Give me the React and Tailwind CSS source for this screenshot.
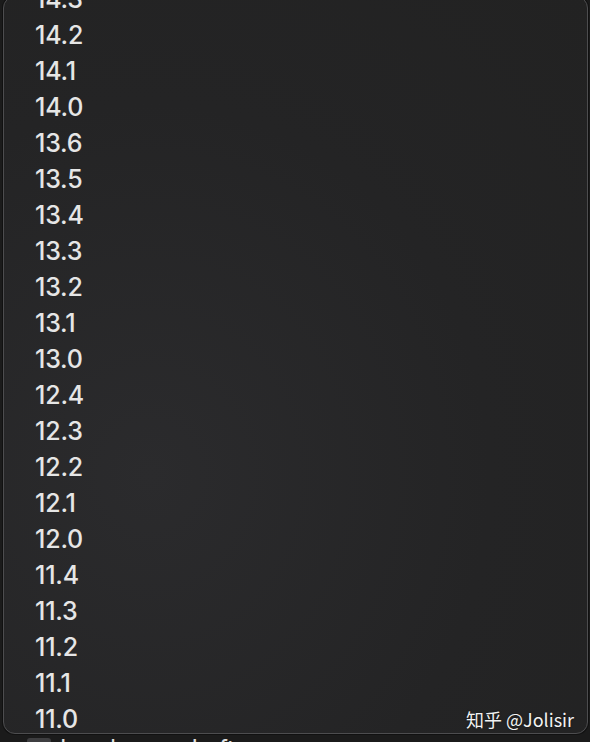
const VERSIONS = [
  "14.3", "14.2", "14.1", "14.0",
  "13.6", "13.5", "13.4", "13.3", "13.2", "13.1", "13.0",
  "12.4", "12.3", "12.2", "12.1", "12.0",
  "11.4", "11.3", "11.2", "11.1", "11.0",
];

export default function App() {
  return (
    <div className="relative h-[742px] w-[590px] overflow-hidden bg-[#1b1b1b] font-['Inter',sans-serif]">
      <div className="ml-[3px] mr-[2px] mt-[-4px] h-[738px] overflow-hidden rounded-[12px] border border-[#4d4d4f] bg-[radial-gradient(ellipse_at_25%_65%,#2b2b2d_0%,#242425_55%,#222222_100%)] shadow-[0_0_0_1px_#111]">
        <ul className="mt-[-16px]">
          {VERSIONS.map((v) => (
            <li key={v} className="flex h-9 items-center pl-[31px] text-[25px] font-medium leading-none tracking-[-0.2px] text-[#e6e6e6]">
              {v}
            </li>
          ))}
        </ul>
      </div>

      <div className="mt-[3px] flex items-start gap-[9px] pl-[27px]">
        <span className="mt-[1px] h-6 w-6 rounded-[3px] bg-[#3e3e40]" />
        <span className="text-[24px] leading-none text-[#e0e0e0]">Landscape Left</span>
      </div>

      <div className="absolute bottom-[14px] right-[16px] font-['Noto_Sans_CJK_SC','Noto_Sans',sans-serif] text-[18px] leading-none text-[#f2f2f2] [text-shadow:0_0_2px_rgba(0,0,0,0.6)]">
        知乎 @Jolisir
      </div>
    </div>
  );
}
